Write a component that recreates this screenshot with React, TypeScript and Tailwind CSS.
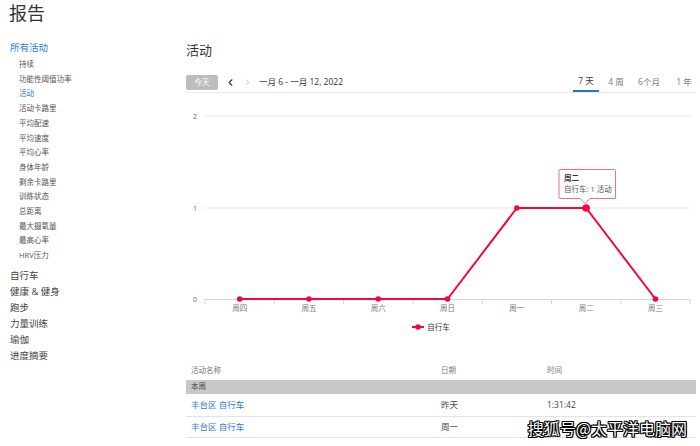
import { ChevronLeft, ChevronRight } from "lucide-react";

const FONT = "font-['Segoe_UI','Open_Sans','Noto_Sans_CJK_SC',sans-serif]";

const subItems = [
  "持续",
  "功能性阈值功率",
  "活动",
  "活动卡路里",
  "平均配速",
  "平均速度",
  "平均心率",
  "身体年龄",
  "剩余卡路里",
  "训练状态",
  "总距离",
  "最大摄氧量",
  "最高心率",
  "HRV压力",
];

const topItems = ["自行车", "健康 & 健身", "跑步", "力量训练", "瑜伽", "进度摘要"];

const days = ["周四", "周五", "周六", "周日", "周一", "周二", "周三"];
const values = [0, 0, 0, 0, 1, 1, 0];

function Chart() {
  const left = 19;
  const step = 69.3;
  const y0 = 198;
  const y1 = 107;
  const y2 = 15;
  const yFor = (v: number) => (v === 0 ? y0 : v === 1 ? y1 : y2);
  const xs = days.map((_, i) => left + step * (i + 0.5));
  const pts = xs.map((x, i) => `${x},${yFor(values[i])}`).join(" ");

  return (
    <svg width="510" height="215" viewBox="0 0 510 215" className="block">
      {/* grid */}
      <line x1={left} x2={504} y1={y2} y2={y2} stroke="#e6e6e6" />
      <line x1={left} x2={504} y1={y1} y2={y1} stroke="#e6e6e6" />
      <text x="7" y={y2 + 3} fontSize="7" fill="#666">2</text>
      <text x="7" y={y1 + 3} fontSize="7" fill="#666">1</text>
      <text x="7" y={y0 + 3} fontSize="7" fill="#666">0</text>

      {/* x axis */}
      <line x1={left} x2={504} y1={y0 + 0.5} y2={y0 + 0.5} stroke="#ccd6eb" />
      {Array.from({ length: 8 }).map((_, i) => (
        <line
          key={i}
          x1={left + step * i}
          x2={left + step * i}
          y1={y0}
          y2={y0 + 5}
          stroke="#ccd6eb"
        />
      ))}
      {days.map((d, i) => (
        <text key={d} x={xs[i]} y={y0 + 12} fontSize="7.5" fill="#777" textAnchor="middle">
          {d}
        </text>
      ))}

      {/* series */}
      <polyline points={pts} fill="none" stroke="#f5073d" strokeWidth="2" strokeLinejoin="round" />
      {xs.map((x, i) => (
        <circle key={i} cx={x} cy={yFor(values[i])} r={i === 5 ? 3.8 : 2.8} fill="#f5073d" />
      ))}

      {/* tooltip */}
      <path
        d="M374 68.5 H428.5 Q429.5 68.5 429.5 69.5 V97.5 H404 L399 102.5 L394 97.5 H374 Q373 97.5 373 96.5 V69.5 Q373 68.5 374 68.5 Z"
        fill="#fff"
        fillOpacity="0.95"
        stroke="#ee6f86"
      />
      <text x="378" y="80" fontSize="7.5" fontWeight="bold" fill="#333">周二</text>
      <text x="378" y="91" fontSize="7.5" fill="#555">自行车: 1 活动</text>
    </svg>
  );
}

export default function App() {
  return (
    <div className={`h-[446px] w-[700px] overflow-hidden bg-white text-[#333] ${FONT} relative`}>
      <h1 className="px-[9px] pt-px text-[18px] leading-[24px] font-normal text-[#333]">报告</h1>

      <div className="mt-[15px] flex">
        {/* Sidebar */}
        <aside className="w-[186px] shrink-0 pl-[10px]">
          <div className="text-[9.5px] leading-[16px] text-[#2f7bd6]">所有活动</div>
          <ul className="mt-px pl-[9px]">
            {subItems.map((s) => (
              <li
                key={s}
                className={`text-[7.5px] leading-[14.7px] ${s === "活动" ? "text-[#2f7bd6]" : "text-[#555]"}`}
              >
                {s}
              </li>
            ))}
          </ul>
          <ul className="mt-[5.5px]">
            {topItems.map((s) => (
              <li key={s} className="text-[9.5px] leading-[16px] text-[#444]">
                {s}
              </li>
            ))}
          </ul>
        </aside>

        {/* Main */}
        <main className="w-[510px]">
          <h2 className="text-[13px] leading-[20px] font-normal text-[#333]">活动</h2>

          <div className="mt-[13px] flex h-[20px] items-center border-b border-[#e8e8e8]">
            <button className="h-[15px] w-[32px] rounded-[2px] bg-[#bdbdbd] text-[7.5px] leading-[15px] text-white">
              今天
            </button>
            <ChevronLeft className="ml-[7px] h-[11px] w-[11px] text-[#333]" strokeWidth={2.4} />
            <ChevronRight className="ml-[6px] h-[11px] w-[11px] text-[#aaa]" strokeWidth={1.5} />
            <span className="ml-[6px] text-[8.5px] text-[#333]">一月 6 - 一月 12, 2022</span>

            <div className="ml-auto flex h-full items-stretch text-[8.5px]">
              <div className="flex w-[26px] items-center justify-center border-b-2 border-[#2a74c4] text-[#333]">
                7 天
              </div>
              <div className="ml-[8px] flex w-[18px] items-center justify-center text-[#777]">4 周</div>
              <div className="ml-[12px] flex w-[24px] items-center justify-center text-[#777]">6个月</div>
              <div className="ml-[15px] flex w-[16px] items-center justify-center text-[#777]">1 年</div>
              <div className="w-[4px]" />
            </div>
          </div>

          <div className="mt-[8px]">
            <Chart />
          </div>

          <div className="mt-[5px] flex items-center justify-center pr-[20px]">
            <svg width="12" height="8" viewBox="0 0 12 8">
              <line x1="0" x2="12" y1="4" y2="4" stroke="#f5073d" strokeWidth="2" />
              <circle cx="6" cy="4" r="2.8" fill="#f5073d" />
            </svg>
            <span className="ml-[3px] text-[7.5px] leading-[12px] text-[#333]">自行车</span>
          </div>

          {/* Table */}
          <div className="mt-[28px] text-[7.5px]">
            <div className="flex h-[19px] items-center text-[#777]">
              <span className="w-[255px] pl-[5px]">活动名称</span>
              <span className="w-[106px]">日期</span>
              <span>时间</span>
            </div>
            <div className="flex h-[14px] items-center bg-[#c8c8c8] pl-[5px] text-[#444]">本周</div>
            <div className="flex h-[23px] items-center border-b border-[#e3e3e3] text-[8.5px]">
              <span className="w-[255px] pl-[5px] text-[#2f7bd6]">丰台区 自行车</span>
              <span className="w-[106px] text-[#444]">昨天</span>
              <span className="text-[#444]">1:31:42</span>
            </div>
            <div className="flex h-[21px] items-center border-b border-[#e3e3e3] text-[8.5px]">
              <span className="w-[255px] pl-[5px] text-[#2f7bd6]">丰台区 自行车</span>
              <span className="w-[106px] text-[#444]">周一</span>
              <span className="text-[#444]"></span>
            </div>
          </div>
        </main>
      </div>

      {/* watermark */}
      <div className="absolute right-[13px] bottom-[8px] font-['Noto_Sans_CJK_SC',sans-serif] text-[16px] leading-[20px] font-normal text-white [text-shadow:1px_1px_0_#000,-1px_-1px_0_#000,1px_-1px_0_#000,-1px_1px_0_#000,0_1px_0_#000,0_-1px_0_#000,1px_0_0_#000,-1px_0_0_#000]">
        搜狐号@太平洋电脑网
      </div>
    </div>
  );
}
